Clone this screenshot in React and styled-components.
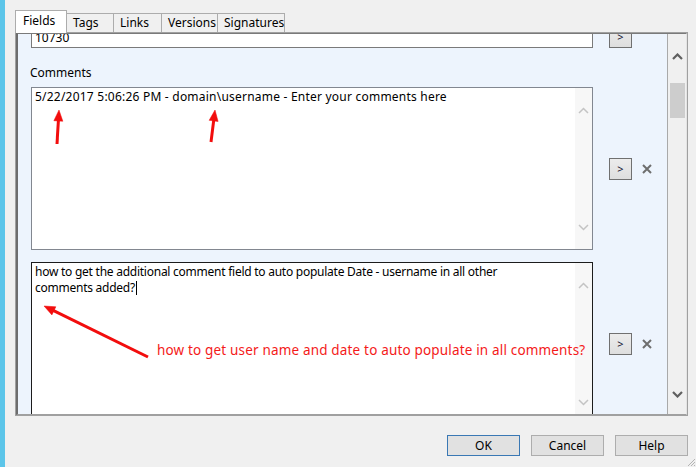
import React from "react";
import styled, { createGlobalStyle } from "styled-components";

const GlobalStyle = createGlobalStyle`
  html, body {
    margin: 0;
    padding: 0;
    background: #f0f0f0;
  }
  body {
    font-family: "Noto Sans", "Liberation Sans", sans-serif;
    font-size: 12px;
    color: #000;
  }
`;

const Window = styled.div`
  position: relative;
  display: flex;
  width: 696px;
  height: 467px;
  overflow: hidden;
  background: #f0f0f0;
`;

const AccentStrip = styled.div`
  flex: none;
  width: 5px;
  background: #5cc5e9;
`;

const Dialog = styled.div`
  flex: 1;
  display: flex;
  flex-direction: column;
  padding: 10px 8px 0 10px;
  min-width: 0;
`;

const TabStrip = styled.div`
  display: flex;
  align-items: flex-end;
  height: 22px;
`;

const Tab = styled.div`
  box-sizing: border-box;
  position: relative;
  z-index: ${(p) => (p.$active ? 2 : 1)};
  width: ${(p) => p.$w}px;
  height: ${(p) => (p.$active ? 23 : 19)}px;
  margin-bottom: ${(p) => (p.$active ? -1 : 0)}px;
  margin-left: -1px;
  padding: ${(p) => (p.$active ? "2px 0 0 7px" : "1px 0 0 6px")};
  border: 1px solid #acacac;
  border-bottom: none;
  background: ${(p) => (p.$active ? "#fff" : "#f0f0f0")};
  line-height: 16px;
  white-space: nowrap;

  &:first-child {
    margin-left: 0;
  }
`;

const TabPanel = styled.div`
  box-sizing: border-box;
  display: flex;
  height: 384px;
  border: 1px solid #a0a0a0;
`;

const ScrollViewer = styled.div`
  flex: 1;
  display: flex;
  min-height: 0;
  border-top: 1px solid #7a7a7a;
  border-left: 2px solid #6d6d6d;
  border-right: 1px solid #e4e4e4;
  border-bottom: 1px solid #a0a0a0;
  background: #edf4fd;
  overflow: hidden;
`;

const FormContent = styled.div`
  flex: 1;
  display: flex;
  flex-direction: column;
  padding-left: 13px;
  overflow: hidden;
`;

const FieldRow = styled.div`
  display: flex;
  align-items: ${(p) => p.$align || "center"};
  flex: none;
  margin-top: ${(p) => p.$top || 0}px;
`;

const TextField = styled.div`
  box-sizing: border-box;
  width: 562px;
  height: 22px;
  padding: 3px 3px 0;
  border: 1px solid #7a7a7a;
  background: #fff;
  line-height: 16px;
`;

const FieldLabel = styled.div`
  margin: 17px 0 0 -1px;
  line-height: 16px;
`;

const CommentBox = styled.div`
  box-sizing: border-box;
  display: flex;
  width: 562px;
  height: 163px;
  border: 1px solid ${(p) => (p.$focused ? "#1c1c1c" : "#828790")};
  background: #fff;
`;

const CommentText = styled.div`
  flex: 1;
  padding: 1px 3px;
  line-height: 16px;
  white-space: nowrap;
  letter-spacing: ${(p) => p.$spacing}px;
  overflow: hidden;
`;

const Caret = styled.span`
  display: inline-block;
  width: 1px;
  height: 14px;
  margin-left: 1px;
  background: #000;
  vertical-align: -3px;
`;

const BoxScroll = styled.div`
  flex: none;
  display: flex;
  flex-direction: column;
  align-items: center;
  justify-content: space-between;
  width: 17px;
  padding: 19px 0 18px;
  background: #f7f7f7;
`;

const SmallButton = styled.div`
  box-sizing: border-box;
  flex: none;
  width: 23px;
  height: 22px;
  margin-left: 16px;
  border: 1px solid #707070;
  background: linear-gradient(#ececec, #dedede);
  color: #141432;
  text-align: center;
  line-height: 20px;
  font-size: 11px;
`;

const RemoveIcon = styled.svg`
  flex: none;
  margin-left: 10px;
`;

const MainScroll = styled.div`
  box-sizing: border-box;
  flex: none;
  display: flex;
  flex-direction: column;
  align-items: center;
  width: 19px;
  padding: 19px 0 16px;
  border-left: 1px solid #a9a9a9;
  background: #f0f0f0;
`;

const Thumb = styled.div`
  width: 15px;
  height: 35px;
  margin-top: 23px;
  background: #cdcdcd;
`;

const Spacer = styled.div`
  flex: 1;
`;

const ButtonBar = styled.div`
  display: flex;
  justify-content: flex-end;
  gap: 11px;
  margin-top: 19px;
`;

const DialogButton = styled.div`
  box-sizing: border-box;
  width: 73px;
  height: 21px;
  border: 1px solid ${(p) => (p.$default ? "#3a78b4" : "#adadad")};
  background: #e1e1e1;
  text-align: center;
  line-height: 19px;
`;

const Grip = styled.svg`
  position: absolute;
  right: 0;
  bottom: 0;
`;

const Annotations = styled.svg`
  position: absolute;
  left: 0;
  top: 0;
  pointer-events: none;
`;

const Note = styled.div`
  position: absolute;
  left: 157px;
  top: 342px;
  color: #f41a1a;
  font-size: 13.5px;
  line-height: 16px;
  letter-spacing: 0.17px;
  white-space: nowrap;
  pointer-events: none;
`;

const Chevron = ({ down, color, sw = 1.5 }) => (
  <svg width="11" height="7" viewBox="0 0 11 7">
    <polyline
      points={down ? "1,1 5.5,5.5 10,1" : "1,6 5.5,1.5 10,6"}
      fill="none"
      stroke={color}
      strokeWidth={sw}
    />
  </svg>
);

const Arrow = ({ x1, y1, x2, y2 }) => {
  const dx = x2 - x1;
  const dy = y2 - y1;
  const len = Math.hypot(dx, dy);
  const ux = dx / len;
  const uy = dy / len;
  const headLen = 11;
  const headW = 4.5;
  const bx = x2 - ux * headLen;
  const by = y2 - uy * headLen;
  const pts = [
    `${x2},${y2}`,
    `${bx - uy * headW},${by + ux * headW}`,
    `${bx + uy * headW},${by - ux * headW}`,
  ].join(" ");
  return (
    <g fill="#f20d0d" stroke="#f20d0d">
      <line x1={x1} y1={y1} x2={bx + ux * 2} y2={by + uy * 2} strokeWidth="3" />
      <polygon points={pts} strokeWidth="0.5" />
    </g>
  );
};

const tabs = [
  { label: "Fields", w: 52, active: true },
  { label: "Tags", w: 48 },
  { label: "Links", w: 49 },
  { label: "Versions", w: 57 },
  { label: "Signatures", w: 68 },
];

const Remove = () => (
  <RemoveIcon width="10" height="10" viewBox="0 0 10 10">
    <path d="M1 1 L9 9 M9 1 L1 9" stroke="#6e6e6e" strokeWidth="2" />
  </RemoveIcon>
);

const CommentRow = ({ focused, spacing, children, top }) => (
  <FieldRow $top={top}>
    <CommentBox $focused={focused}>
      <CommentText $spacing={spacing}>{children}</CommentText>
      <BoxScroll>
        <Chevron color="#c4c4c4" />
        <Chevron down color="#c4c4c4" />
      </BoxScroll>
    </CommentBox>
    <SmallButton>&gt;</SmallButton>
    <Remove />
  </FieldRow>
);

export default function App() {
  return (
    <Window>
      <GlobalStyle />
      <AccentStrip />
      <Dialog>
        <TabStrip>
          {tabs.map((t) => (
            <Tab key={t.label} $w={t.w} $active={t.active}>
              {t.label}
            </Tab>
          ))}
        </TabStrip>
        <TabPanel>
          <ScrollViewer>
            <FormContent>
              <FieldRow $align="flex-end" $top={-8}>
                <TextField>10730</TextField>
                <SmallButton>&gt;</SmallButton>
              </FieldRow>
              <FieldLabel>Comments</FieldLabel>
              <CommentRow top={6} spacing={0.22}>
                5/22/2017 5:06:26 PM - domain\username - Enter your comments here
              </CommentRow>
              <CommentRow focused top={12} spacing={-0.25}>
                how to get the additional comment field to auto populate Date - username in all other
                <br />
                comments added?
                <Caret />
              </CommentRow>
            </FormContent>
            <MainScroll>
              <Chevron color="#606060" sw={2.2} />
              <Thumb />
              <Spacer />
              <Chevron down color="#606060" sw={2.2} />
            </MainScroll>
          </ScrollViewer>
        </TabPanel>
        <ButtonBar>
          <DialogButton $default>OK</DialogButton>
          <DialogButton>Cancel</DialogButton>
          <DialogButton>Help</DialogButton>
        </ButtonBar>
      </Dialog>
      <Grip width="9" height="9" viewBox="0 0 9 9">
        <path d="M8 1 L1 8 M8 4 L4 8 M8 7 L7 8" stroke="#b4b4b4" strokeWidth="1" />
      </Grip>
      <Annotations width="696" height="467">
        <Arrow x1={57} y1={144} x2={59} y2={110} />
        <Arrow x1={211} y1={142} x2={215} y2={110} />
        <Arrow x1={148} y1={357} x2={44} y2={306} />
      </Annotations>
      <Note>how to get user name and date to auto populate in all comments?</Note>
    </Window>
  );
}
